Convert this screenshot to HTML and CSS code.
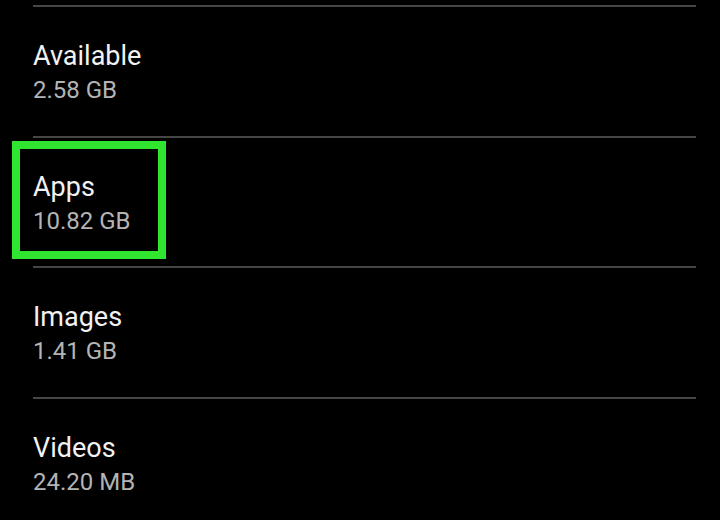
FILE: index.html
```html
<!DOCTYPE html>
<html>
<head>
<meta charset="utf-8">
<link rel="stylesheet" href="styles.css">
</head>
<body>
<ul class="list">
  <li class="item">
    <div class="title">Available</div>
    <div class="size">2.58 GB</div>
  </li>
  <li class="item highlighted">
    <div class="title">Apps</div>
    <div class="size">10.82 GB</div>
    <div class="marker"></div>
  </li>
  <li class="item">
    <div class="title">Images</div>
    <div class="size">1.41 GB</div>
  </li>
  <li class="item">
    <div class="title">Videos</div>
    <div class="size">24.20 MB</div>
  </li>
</ul>
</body>
</html>
```
FILE: styles.css
```css
html, body {
  margin: 0;
  padding: 0;
  background: #000;
  height: 520px;
  overflow: hidden;
}
body {
  font-family: Roboto, "Noto Sans", sans-serif;
}
.list {
  list-style: none;
  margin: 0 24px 0 33px;
  padding: 5px 0 0 0;
}
.item {
  position: relative;
  box-sizing: border-box;
  height: 130.5px;
  border-top: 2px solid #464646;
  padding-top: 32px;
}
.title {
  font-size: 27px;
  line-height: 34px;
  color: #f2f2f2;
}
.size {
  font-size: 24px;
  line-height: 35px;
  color: #b4b4b4;
}
.marker {
  position: absolute;
  top: 3px;
  left: -21px;
  width: 154px;
  height: 118px;
  box-sizing: border-box;
  border: 8px solid #30e530;
}
```
